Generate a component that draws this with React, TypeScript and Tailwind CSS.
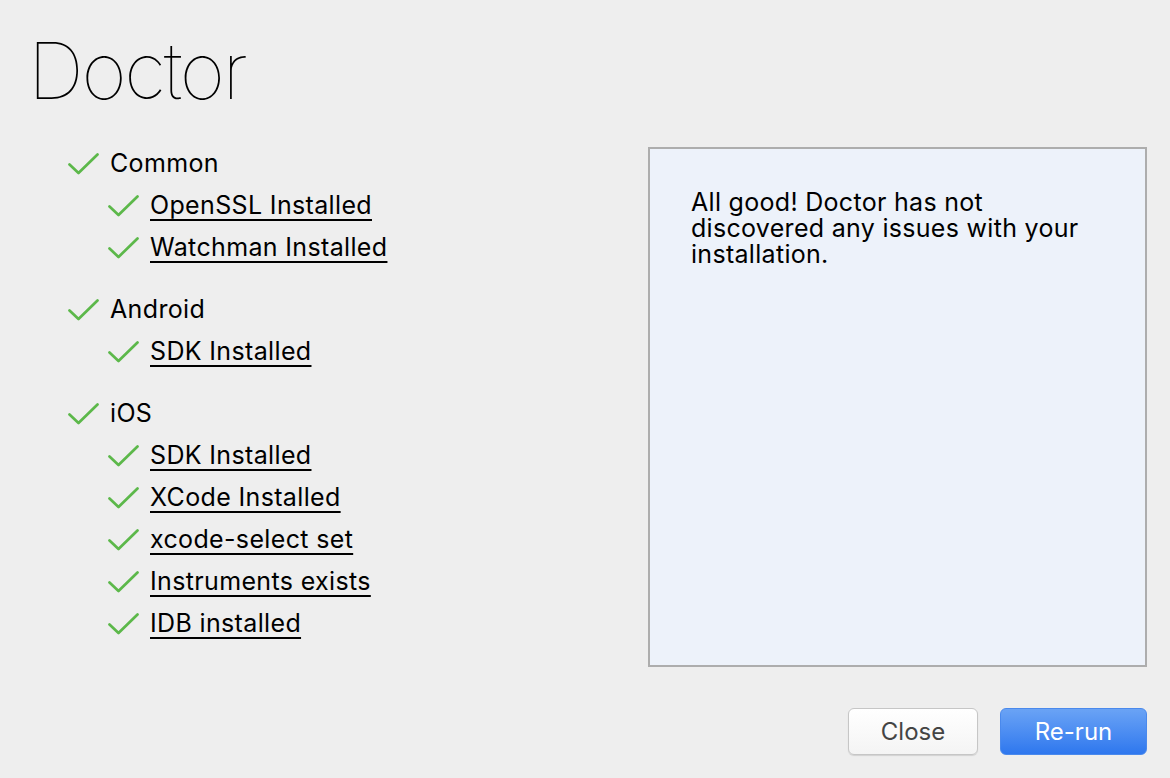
import React from 'react';

type Check = { label: string; children: string[] };

const groups: Check[] = [
  { label: 'Common', children: ['OpenSSL Installed', 'Watchman Installed'] },
  { label: 'Android', children: ['SDK Installed'] },
  {
    label: 'iOS',
    children: ['SDK Installed', 'XCode Installed', 'xcode-select set', 'Instruments exists', 'IDB installed'],
  },
];

function Tick() {
  return (
    <svg width="31" height="22" viewBox="0 0 31 22" className="shrink-0">
      <path d="M1.5 11.5 L10.5 20 L29.5 1.5" fill="none" stroke="#5cb84a" strokeWidth="2.7" strokeLinecap="round" strokeLinejoin="round" />
    </svg>
  );
}

export default function App() {
  return (
    <div className="h-[778px] w-[1170px] overflow-hidden bg-[#eeeeee] text-black font-['Inter','Noto_Sans',sans-serif]">
      <div className="h-[147px] pl-[28px] pt-[32px]">
        <h1 className="text-[78px] font-thin leading-[78px] tracking-[-2.3px]">Doctor</h1>
      </div>

      <div className="flex h-[520px]">
        <div className="w-[580px] -mt-[4px] pl-[68px]">
          {groups.map((g) => (
            <div key={g.label} className="mb-[20px]">
              <div className="flex h-[42px] items-center gap-[11px]">
                <Tick />
                <span className="text-[25px] tracking-[0.35px]">{g.label}</span>
              </div>
              {g.children.map((c, i) => (
                <div key={`${c}-${i}`} className="flex h-[42px] items-center gap-[11px] pl-[40px]">
                  <Tick />
                  <span className="text-[25px] tracking-[0.35px] underline underline-offset-[5px] decoration-[2px]">{c}</span>
                </div>
              ))}
            </div>
          ))}
        </div>

        <div className="ml-[68px] h-[520px] w-[499px] border-2 border-[#adadad] bg-[#edf2fa] pl-[41px] pt-[40px]">
          <p className="text-[25px] leading-[26px] tracking-[0.3px]">
            All good! Doctor has not
            <br />
            discovered any issues with your
            <br />
            installation.
          </p>
        </div>
      </div>

      <div className="mt-[41px] flex justify-end gap-[22px] pr-[23px]">
        <button className="h-[47px] w-[130px] rounded-[6px] border border-[#c6c6c6] bg-gradient-to-b from-white to-[#f4f4f4] text-[24px] text-[#444] shadow-[0_1px_1px_rgba(0,0,0,0.12)]">
          Close
        </button>
        <button className="h-[47px] w-[147px] rounded-[6px] border border-[#4a89ec] bg-gradient-to-b from-[#6aa3f5] to-[#2e77ee] text-[24px] text-white">
          Re-run
        </button>
      </div>
    </div>
  );
}
